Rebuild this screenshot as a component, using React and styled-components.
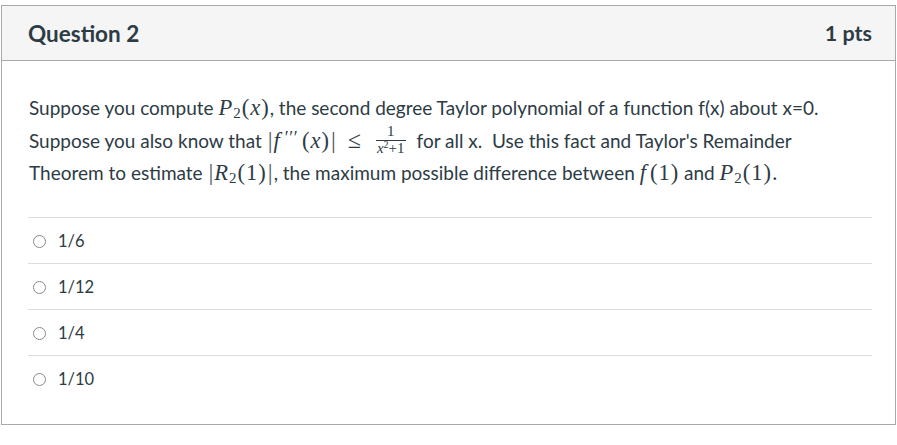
import React from "react";
import styled, { createGlobalStyle } from "styled-components";

const Global = createGlobalStyle`
  html, body { margin: 0; padding: 0; background: #fff; }
  body { font-family: Lato, "Noto Sans", sans-serif; color: #2d3b45; }
`;

const Page = styled.div`
  padding: 5px 0 0 1px;
`;

const Card = styled.div`
  width: 893px;
  height: 418px;
  border: 1px solid #a9a9a9;
  box-sizing: content-box;
  display: flex;
  flex-direction: column;
`;

const Header = styled.div`
  height: 54px;
  background: #f5f5f5;
  border-bottom: 1px solid #a9a9a9;
  display: flex;
  align-items: center;
  justify-content: space-between;
  padding: 0 23px 0 26px;
`;

const Title = styled.h2`
  margin: 0;
  font-size: 22.5px;
  font-weight: 700;
  color: #2d3b45;
`;

const Points = styled.span`
  font-size: 21.5px;
  font-weight: 700;
  color: #2d3b45;
`;

const Body = styled.div`
  padding: 31px 23px 0 26px;
`;

const Prompt = styled.div`
  font-size: 19px;
  padding-left: 1px;
`;

const Line = styled.div`
  height: 32px;
  line-height: 32px;
  white-space: nowrap;
`;

const M = styled.span`
  font-family: "Liberation Serif", "DejaVu Serif", serif;
  font-size: 22.5px;
  font-style: ${(p) => (p.$it ? "italic" : "normal")};
  letter-spacing: 1px;
  margin-right: ${(p) => p.$mr || 0}px;
`;

const Rel = styled.span`
  font-family: "Liberation Serif", "DejaVu Serif", serif;
  font-size: 24px;
  margin: 0 4px 0 6px;
`;

const Sub = styled.span`
  font-family: "Liberation Serif", serif;
  font-size: 15px;
  font-style: normal;
  vertical-align: -3px;
  line-height: 0;
  margin: 0 1px 0 0;
`;

const Prime = styled.span`
  font-family: "Liberation Serif", serif;
  font-size: 18px;
  vertical-align: 4px;
  line-height: 0;
  letter-spacing: 0.5px;
  margin-left: 4px;
  margin-right: 4px;
`;

const Frac = styled.span`
  display: inline-flex;
  flex-direction: column;
  align-items: center;
  vertical-align: 12px;
  font-family: "Liberation Serif", serif;
  font-size: 15px;
  line-height: 13px;
  margin: 0 11px 0 11px;
`;

const Num = styled.span`
  border-bottom: 1px solid #2d3b45;
  padding: 0 2px 2px;
  align-self: stretch;
  text-align: center;
`;

const Den = styled.span`
  padding: 1px 1px 0;
`;

const Sup = styled.span`
  font-size: 10px;
  vertical-align: 5px;
  line-height: 0;
`;

const Bar = styled.span`
  font-family: "Liberation Serif", serif;
  font-size: 24px;
  font-weight: 300;
  color: #4a5660;
  margin: 0 1px;
`;

const Answers = styled.div`
  margin-top: 29px;
`;

const Row = styled.label`
  display: flex;
  align-items: center;
  height: 45px;
  border-top: 1px solid #dcdcdc;
  padding-left: 5px;
  gap: 12px;
  font-size: 16.5px;
`;

const Radio = styled.span`
  width: 11px;
  height: 11px;
  border: 1px solid #8a8a8a;
  border-radius: 50%;
  flex: none;
  margin-top: 1px;
`;

const AnswerText = styled.span`
  color: #2d3b45;
`;

const P2 = ({ arg }) => (
  <>
    <M $it>P</M>
    <Sub>2</Sub>
    <M>(</M>
    {arg === "x" ? <M $it>x</M> : <M>1</M>}
    <M>)</M>
  </>
);

export default function App() {
  const answers = ["1/6", "1/12", "1/4", "1/10"];
  return (
    <>
      <Global />
      <Page>
        <Card>
          <Header>
            <Title>Question 2</Title>
            <Points>1 pts</Points>
          </Header>
          <Body>
            <Prompt>
              <Line>
                Suppose you compute <P2 arg="x" />, the second degree Taylor polynomial of a function f(x) about x=0.
              </Line>
              <Line>
                Suppose you also know that <Bar>|</Bar>
                <M $it>f</M>
                <Prime>′′′</Prime>
                <M>(</M>
                <M $it>x</M>
                <M>)</M>
                <Bar>|</Bar> <Rel>≤</Rel>
                <Frac>
                  <Num>1</Num>
                  <Den>
                    <i>x</i>
                    <Sup>2</Sup>+1
                  </Den>
                </Frac>
                for all x.&nbsp; Use this fact and Taylor's Remainder
              </Line>
              <Line>
                Theorem to estimate <Bar>|</Bar>
                <M $it>R</M>
                <Sub>2</Sub>
                <M>(1)</M>
                <Bar>|</Bar>, the maximum possible difference between <M $it $mr={3}>f</M>
                <M>(1)</M> and <P2 arg="1" />
                <M>.</M>
              </Line>
            </Prompt>
            <Answers>
              {answers.map((a) => (
                <Row key={a}>
                  <Radio />
                  <AnswerText>{a}</AnswerText>
                </Row>
              ))}
            </Answers>
          </Body>
        </Card>
      </Page>
    </>
  );
}
